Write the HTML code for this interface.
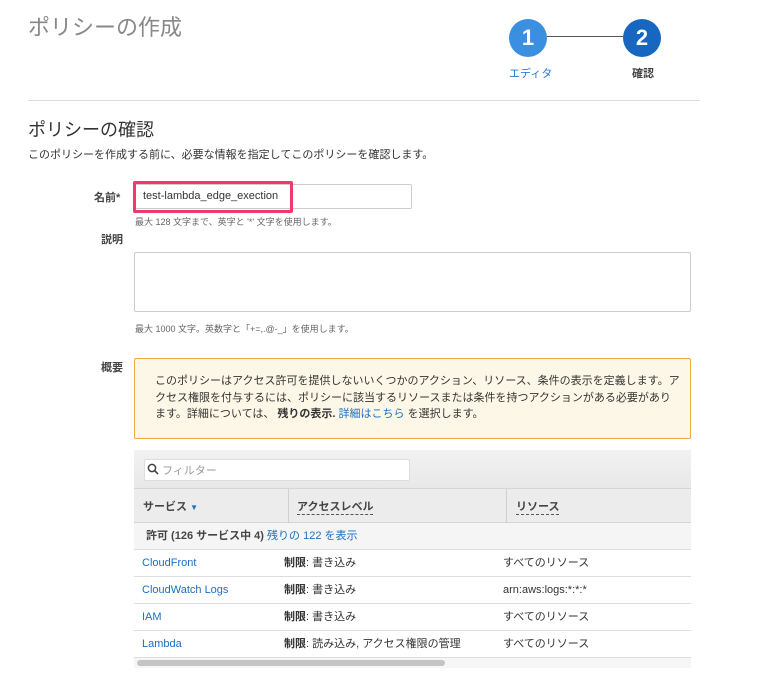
<!DOCTYPE html>
<html><head><meta charset="utf-8"><style>
*{box-sizing:border-box;margin:0;padding:0}
body{width:768px;height:689px;background:#fff;font-family:"Liberation Sans","Noto Sans CJK JP",sans-serif;color:#333;position:relative;overflow:hidden}
.a{position:absolute;white-space:nowrap}
.circ{position:absolute;width:38px;height:38px;border-radius:50%;color:#fff;font-weight:bold;font-size:22px;text-align:center;line-height:38px}
.lbl{font-size:11px;font-weight:bold;color:#444}
.hint{font-size:9px;color:#666}
.row{position:absolute;left:134px;width:557px;height:27px;border-bottom:1px solid #ddd;font-size:11px;line-height:26px}
.row > span{position:absolute;top:0}
.link{color:#1a6fc4}
</style></head><body>
<div class="a" style="left:28px;top:10px;font-size:22px;color:#888">ポリシーの作成</div>
<div class="a" style="left:547px;top:36px;width:76px;height:1px;background:#555"></div>
<div class="circ" style="left:509px;top:19px;background:#3a8fe0">1</div>
<div class="circ" style="left:623px;top:19px;background:#1766c0">2</div>
<div class="a" style="left:509px;top:65px;font-size:11px;color:#2a7bd0">エディタ</div>
<div class="a" style="left:632px;top:65px;font-size:11px;color:#444;font-weight:bold">確認</div>
<div class="a" style="left:28px;top:100px;width:672px;height:1px;background:#ddd"></div>
<div class="a" style="left:28px;top:116px;font-size:18px;color:#333">ポリシーの確認</div>
<div class="a" style="left:28px;top:146px;font-size:11px;color:#333">このポリシーを作成する前に、必要な情報を指定してこのポリシーを確認します。</div>
<div class="a lbl" style="left:94px;top:189px">名前*</div>
<div class="a" style="left:134px;top:184px;width:278px;height:25px;border:1px solid #ccc;border-radius:2px"></div>
<div class="a" style="left:133px;top:181px;width:160px;height:32px;border:3px solid #f2386c;border-radius:2px"></div>
<div class="a" style="left:143px;top:190px;font-size:11px;color:#333">test-lambda_edge_exection</div>
<div class="a hint" style="left:135px;top:215px">最大 128 文字まで、英字と '*' 文字を使用します。</div>
<div class="a lbl" style="left:101px;top:231px">説明</div>
<div class="a" style="left:134px;top:252px;width:557px;height:60px;border:1px solid #ccc;border-radius:2px"></div>
<div class="a hint" style="left:135px;top:322px">最大 1000 文字。英数字と「+=,.@-_」を使用します。</div>
<div class="a lbl" style="left:101px;top:359px">概要</div>
<div class="a" style="left:134px;top:358px;width:557px;height:81px;border:1px solid #f0a848;border-radius:2px;background:#fdf7e7"></div>
<div class="a" style="left:155px;top:373px;font-size:11px;line-height:16.5px;color:#333;white-space:normal;width:525px">このポリシーはアクセス許可を提供しないいくつかのアクション、リソース、条件の表示を定義します。アクセス権限を付与するには、ポリシーに該当するリソースまたは条件を持つアクションがある必要があります。詳細については、 <b>残りの表示.</b> <span class="link">詳細はこちら</span> を選択します。</div>
<div class="a" style="left:134px;top:450px;width:557px;height:39px;background:linear-gradient(#f2f2f2,#e8e8e8);border-bottom:1px solid #d5d5d5"></div>
<div class="a" style="left:144px;top:459px;width:266px;height:22px;background:#fff;border:1px solid #ddd;border-radius:2px"></div>
<svg class="a" style="left:147px;top:463px" width="12" height="12" viewBox="0 0 12 12"><circle cx="5" cy="5" r="3.6" fill="none" stroke="#444" stroke-width="1.5"/><path d="M7.6 7.6L11 11" stroke="#444" stroke-width="1.6"/></svg>
<div class="a" style="left:162px;top:462px;font-size:11px;color:#999">フィルター</div>
<div class="a" style="left:134px;top:489px;width:557px;height:34px;background:#ececec;border-bottom:1px solid #d5d5d5"></div>
<div class="a" style="left:288px;top:489px;width:1px;height:34px;background:#d0d0d0"></div>
<div class="a" style="left:506px;top:489px;width:1px;height:34px;background:#d0d0d0"></div>
<div class="a" style="left:143px;top:498px;font-size:11px;font-weight:bold;color:#444">サービス <span style="color:#1a6fc4;font-size:8px">▼</span></div>
<div class="a" style="left:297px;top:498px;font-size:11px;font-weight:bold;color:#444;border-bottom:1px dashed #555">アクセスレベル</div>
<div class="a" style="left:516px;top:498px;font-size:11px;font-weight:bold;color:#444;border-bottom:1px dashed #555">リソース</div>
<div class="row" style="top:523px;background:#f5f5f5"><span style="left:12px;font-weight:bold;color:#444">許可 (126 サービス中 4) <span class="link" style="font-weight:normal">残りの 122 を表示</span></span></div>
<div class="row" style="top:550px"><span class="link" style="left:8px">CloudFront</span><span style="left:150px"><b>制限</b>: 書き込み</span><span style="left:369px">すべてのリソース</span></div>
<div class="row" style="top:577px"><span class="link" style="left:8px">CloudWatch Logs</span><span style="left:150px"><b>制限</b>: 書き込み</span><span style="left:369px">arn:aws:logs:*:*:*</span></div>
<div class="row" style="top:604px"><span class="link" style="left:8px">IAM</span><span style="left:150px"><b>制限</b>: 書き込み</span><span style="left:369px">すべてのリソース</span></div>
<div class="row" style="top:631px"><span class="link" style="left:8px">Lambda</span><span style="left:150px"><b>制限</b>: 読み込み, アクセス権限の管理</span><span style="left:369px">すべてのリソース</span></div>
<div class="a" style="left:134px;top:658px;width:557px;height:10px;background:#f6f6f6"></div>
<div class="a" style="left:137px;top:660px;width:308px;height:6px;background:#c4c4c4;border-radius:3px"></div>
</body></html>
